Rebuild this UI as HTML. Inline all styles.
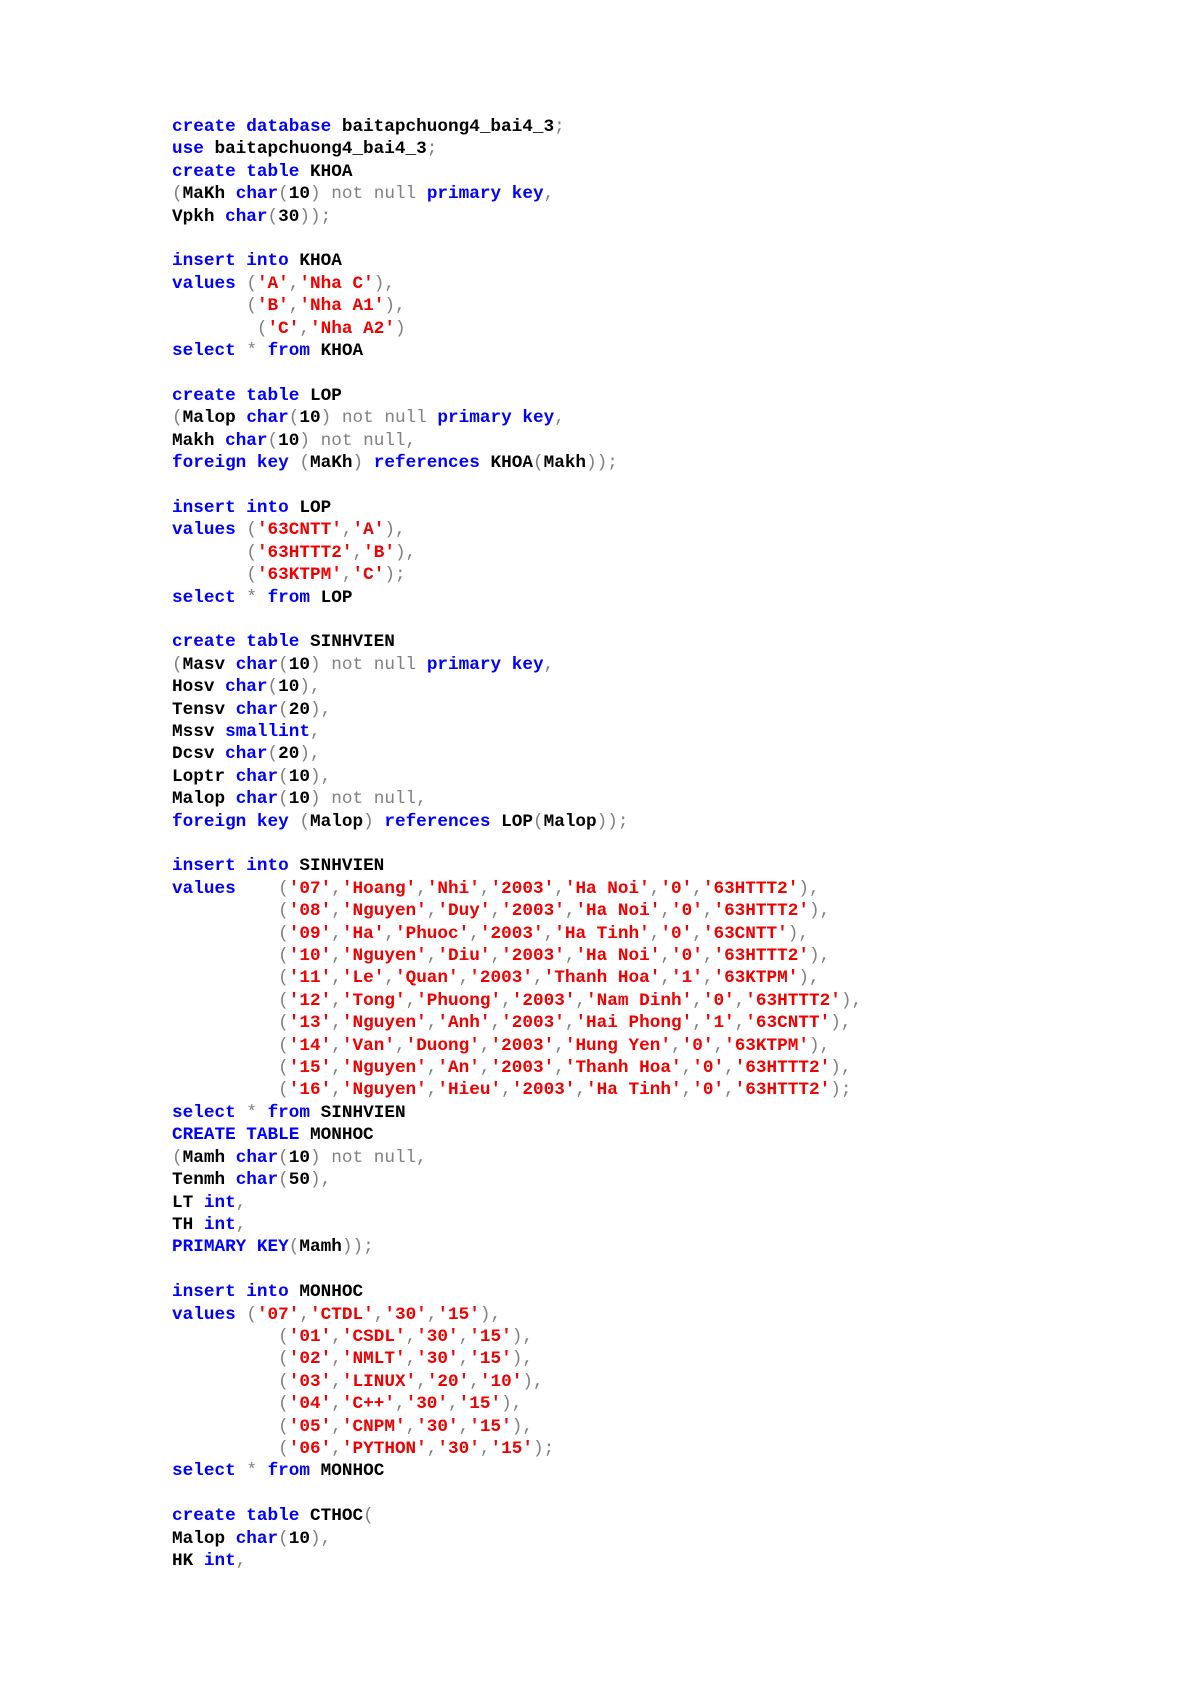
<!DOCTYPE html>
<html><head><meta charset="utf-8"><style>
html,body{margin:0;padding:0;background:#fff;width:1200px;height:1698px;overflow:hidden}
pre{position:absolute;left:172px;top:116px;margin:0;font-family:"Liberation Mono",monospace;font-size:17.7px;line-height:22.4px;font-weight:bold;color:#000;letter-spacing:0}
.b{color:#0000ff}.r{color:#f00000}.g{color:#808080;font-weight:normal}
</style></head><body><pre><span class="b">create database</span> baitapchuong4_bai4_3<span class="g">;</span>
<span class="b">use</span> baitapchuong4_bai4_3<span class="g">;</span>
<span class="b">create table</span> KHOA
<span class="g">(</span>MaKh <span class="b">char</span><span class="g">(</span>10<span class="g">) not null</span> <span class="b">primary key</span><span class="g">,</span>
Vpkh <span class="b">char</span><span class="g">(</span>30<span class="g">));</span>

<span class="b">insert into</span> KHOA
<span class="b">values</span> <span class="g">(</span><span class="r">'A'</span><span class="g">,</span><span class="r">'Nha C'</span><span class="g">),</span>
       <span class="g">(</span><span class="r">'B'</span><span class="g">,</span><span class="r">'Nha A1'</span><span class="g">),</span>
        <span class="g">(</span><span class="r">'C'</span><span class="g">,</span><span class="r">'Nha A2'</span><span class="g">)</span>
<span class="b">select</span> <span class="g">*</span> <span class="b">from</span> KHOA

<span class="b">create table</span> LOP
<span class="g">(</span>Malop <span class="b">char</span><span class="g">(</span>10<span class="g">) not null</span> <span class="b">primary key</span><span class="g">,</span>
Makh <span class="b">char</span><span class="g">(</span>10<span class="g">) not null,</span>
<span class="b">foreign key</span> <span class="g">(</span>MaKh<span class="g">)</span> <span class="b">references</span> KHOA<span class="g">(</span>Makh<span class="g">));</span>

<span class="b">insert into</span> LOP
<span class="b">values</span> <span class="g">(</span><span class="r">'63CNTT'</span><span class="g">,</span><span class="r">'A'</span><span class="g">),</span>
       <span class="g">(</span><span class="r">'63HTTT2'</span><span class="g">,</span><span class="r">'B'</span><span class="g">),</span>
       <span class="g">(</span><span class="r">'63KTPM'</span><span class="g">,</span><span class="r">'C'</span><span class="g">);</span>
<span class="b">select</span> <span class="g">*</span> <span class="b">from</span> LOP

<span class="b">create table</span> SINHVIEN
<span class="g">(</span>Masv <span class="b">char</span><span class="g">(</span>10<span class="g">) not null</span> <span class="b">primary key</span><span class="g">,</span>
Hosv <span class="b">char</span><span class="g">(</span>10<span class="g">),</span>
Tensv <span class="b">char</span><span class="g">(</span>20<span class="g">),</span>
Mssv <span class="b">smallint</span><span class="g">,</span>
Dcsv <span class="b">char</span><span class="g">(</span>20<span class="g">),</span>
Loptr <span class="b">char</span><span class="g">(</span>10<span class="g">),</span>
Malop <span class="b">char</span><span class="g">(</span>10<span class="g">) not null,</span>
<span class="b">foreign key</span> <span class="g">(</span>Malop<span class="g">)</span> <span class="b">references</span> LOP<span class="g">(</span>Malop<span class="g">));</span>

<span class="b">insert into</span> SINHVIEN
<span class="b">values</span>    <span class="g">(</span><span class="r">'07'</span><span class="g">,</span><span class="r">'Hoang'</span><span class="g">,</span><span class="r">'Nhi'</span><span class="g">,</span><span class="r">'2003'</span><span class="g">,</span><span class="r">'Ha Noi'</span><span class="g">,</span><span class="r">'0'</span><span class="g">,</span><span class="r">'63HTTT2'</span><span class="g">),</span>
          <span class="g">(</span><span class="r">'08'</span><span class="g">,</span><span class="r">'Nguyen'</span><span class="g">,</span><span class="r">'Duy'</span><span class="g">,</span><span class="r">'2003'</span><span class="g">,</span><span class="r">'Ha Noi'</span><span class="g">,</span><span class="r">'0'</span><span class="g">,</span><span class="r">'63HTTT2'</span><span class="g">),</span>
          <span class="g">(</span><span class="r">'09'</span><span class="g">,</span><span class="r">'Ha'</span><span class="g">,</span><span class="r">'Phuoc'</span><span class="g">,</span><span class="r">'2003'</span><span class="g">,</span><span class="r">'Ha Tinh'</span><span class="g">,</span><span class="r">'0'</span><span class="g">,</span><span class="r">'63CNTT'</span><span class="g">),</span>
          <span class="g">(</span><span class="r">'10'</span><span class="g">,</span><span class="r">'Nguyen'</span><span class="g">,</span><span class="r">'Diu'</span><span class="g">,</span><span class="r">'2003'</span><span class="g">,</span><span class="r">'Ha Noi'</span><span class="g">,</span><span class="r">'0'</span><span class="g">,</span><span class="r">'63HTTT2'</span><span class="g">),</span>
          <span class="g">(</span><span class="r">'11'</span><span class="g">,</span><span class="r">'Le'</span><span class="g">,</span><span class="r">'Quan'</span><span class="g">,</span><span class="r">'2003'</span><span class="g">,</span><span class="r">'Thanh Hoa'</span><span class="g">,</span><span class="r">'1'</span><span class="g">,</span><span class="r">'63KTPM'</span><span class="g">),</span>
          <span class="g">(</span><span class="r">'12'</span><span class="g">,</span><span class="r">'Tong'</span><span class="g">,</span><span class="r">'Phuong'</span><span class="g">,</span><span class="r">'2003'</span><span class="g">,</span><span class="r">'Nam Dinh'</span><span class="g">,</span><span class="r">'0'</span><span class="g">,</span><span class="r">'63HTTT2'</span><span class="g">),</span>
          <span class="g">(</span><span class="r">'13'</span><span class="g">,</span><span class="r">'Nguyen'</span><span class="g">,</span><span class="r">'Anh'</span><span class="g">,</span><span class="r">'2003'</span><span class="g">,</span><span class="r">'Hai Phong'</span><span class="g">,</span><span class="r">'1'</span><span class="g">,</span><span class="r">'63CNTT'</span><span class="g">),</span>
          <span class="g">(</span><span class="r">'14'</span><span class="g">,</span><span class="r">'Van'</span><span class="g">,</span><span class="r">'Duong'</span><span class="g">,</span><span class="r">'2003'</span><span class="g">,</span><span class="r">'Hung Yen'</span><span class="g">,</span><span class="r">'0'</span><span class="g">,</span><span class="r">'63KTPM'</span><span class="g">),</span>
          <span class="g">(</span><span class="r">'15'</span><span class="g">,</span><span class="r">'Nguyen'</span><span class="g">,</span><span class="r">'An'</span><span class="g">,</span><span class="r">'2003'</span><span class="g">,</span><span class="r">'Thanh Hoa'</span><span class="g">,</span><span class="r">'0'</span><span class="g">,</span><span class="r">'63HTTT2'</span><span class="g">),</span>
          <span class="g">(</span><span class="r">'16'</span><span class="g">,</span><span class="r">'Nguyen'</span><span class="g">,</span><span class="r">'Hieu'</span><span class="g">,</span><span class="r">'2003'</span><span class="g">,</span><span class="r">'Ha Tinh'</span><span class="g">,</span><span class="r">'0'</span><span class="g">,</span><span class="r">'63HTTT2'</span><span class="g">);</span>
<span class="b">select</span> <span class="g">*</span> <span class="b">from</span> SINHVIEN
<span class="b">CREATE TABLE</span> MONHOC
<span class="g">(</span>Mamh <span class="b">char</span><span class="g">(</span>10<span class="g">) not null,</span>
Tenmh <span class="b">char</span><span class="g">(</span>50<span class="g">),</span>
LT <span class="b">int</span><span class="g">,</span>
TH <span class="b">int</span><span class="g">,</span>
<span class="b">PRIMARY KEY</span><span class="g">(</span>Mamh<span class="g">));</span>

<span class="b">insert into</span> MONHOC
<span class="b">values</span> <span class="g">(</span><span class="r">'07'</span><span class="g">,</span><span class="r">'CTDL'</span><span class="g">,</span><span class="r">'30'</span><span class="g">,</span><span class="r">'15'</span><span class="g">),</span>
          <span class="g">(</span><span class="r">'01'</span><span class="g">,</span><span class="r">'CSDL'</span><span class="g">,</span><span class="r">'30'</span><span class="g">,</span><span class="r">'15'</span><span class="g">),</span>
          <span class="g">(</span><span class="r">'02'</span><span class="g">,</span><span class="r">'NMLT'</span><span class="g">,</span><span class="r">'30'</span><span class="g">,</span><span class="r">'15'</span><span class="g">),</span>
          <span class="g">(</span><span class="r">'03'</span><span class="g">,</span><span class="r">'LINUX'</span><span class="g">,</span><span class="r">'20'</span><span class="g">,</span><span class="r">'10'</span><span class="g">),</span>
          <span class="g">(</span><span class="r">'04'</span><span class="g">,</span><span class="r">'C++'</span><span class="g">,</span><span class="r">'30'</span><span class="g">,</span><span class="r">'15'</span><span class="g">),</span>
          <span class="g">(</span><span class="r">'05'</span><span class="g">,</span><span class="r">'CNPM'</span><span class="g">,</span><span class="r">'30'</span><span class="g">,</span><span class="r">'15'</span><span class="g">),</span>
          <span class="g">(</span><span class="r">'06'</span><span class="g">,</span><span class="r">'PYTHON'</span><span class="g">,</span><span class="r">'30'</span><span class="g">,</span><span class="r">'15'</span><span class="g">);</span>
<span class="b">select</span> <span class="g">*</span> <span class="b">from</span> MONHOC

<span class="b">create table</span> CTHOC<span class="g">(</span>
Malop <span class="b">char</span><span class="g">(</span>10<span class="g">),</span>
HK <span class="b">int</span><span class="g">,</span></pre></body></html>
